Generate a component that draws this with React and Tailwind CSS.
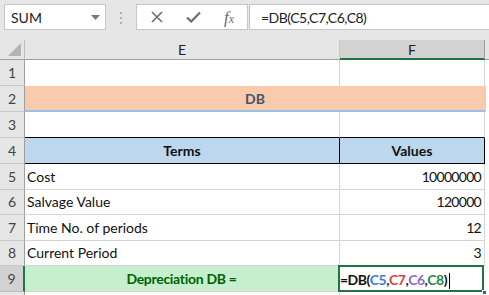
import React from "react";

const font = { fontFamily: "Lato, 'Open Sans', sans-serif" };

function Toolbar() {
  return (
    <div className="flex h-[40px] items-start bg-[#e6e6e6] pt-[4px]">
      {/* Name box */}
      <div className="ml-[4px] flex h-[26px] w-[102px] items-center justify-between border border-[#c6c6c6] bg-white pl-[6px] pr-[5px]">
        <span className="text-[14px] text-[#222]">SUM</span>
        <svg width="9" height="5" viewBox="0 0 9 5">
          <path d="M0 0h9L4.5 5z" fill="#7a7a7a" />
        </svg>
      </div>
      {/* separator dots */}
      <div className="flex w-[30px] flex-col items-center gap-[3px] pt-[8px]">
        <span className="h-[2px] w-[2px] bg-[#b0b0b0]" />
        <span className="h-[2px] w-[2px] bg-[#b0b0b0]" />
        <span className="h-[2px] w-[2px] bg-[#b0b0b0]" />
      </div>
      {/* icon box */}
      <div className="flex h-[26px] w-[112px] items-center border border-[#c6c6c6] bg-white">
        <div className="flex w-[38px] justify-center pl-[2px]">
          <svg width="12" height="12" viewBox="0 0 12 12">
            <path d="M1 1l10 10M11 1L1 11" stroke="#6e6e6e" strokeWidth="1.6" />
          </svg>
        </div>
        <div className="flex w-[36px] justify-center">
          <svg width="15" height="12" viewBox="0 0 15 12">
            <path d="M1 6.5l4.2 4L14 1.5" stroke="#6e6e6e" strokeWidth="2.2" fill="none" />
          </svg>
        </div>
        <div className="flex w-[36px] justify-center">
          <span
            className="text-[17px] italic leading-none text-[#6e6e6e]"
            style={{ fontFamily: "'Liberation Serif', serif" }}
          >
            f<span className="text-[12px]">x</span>
          </span>
        </div>
      </div>
      {/* formula box */}
      <div className="ml-[1px] flex h-[26px] flex-1 items-center border border-[#c6c6c6] border-r-0 bg-white pl-[11px]">
        <span className="text-[14px] tracking-[-0.5px] text-[#222]">=DB(C5,C7,C6,C8)</span>
      </div>
    </div>
  );
}

function RowHead({ n, h, active }) {
  return (
    <div
      className={
        "flex w-[25px] shrink-0 items-end justify-center pb-[2px] text-[14px] text-[#444] " +
        (active
          ? "border-r-2 border-b border-r-[#217346] border-b-[#bdbdbd] bg-[#d2d2d2]"
          : "border-r border-b border-r-[#9e9e9e] border-b-[#c8c8c8] bg-[#e6e6e6]")
      }
      style={{ height: h }}
    >
      {n}
    </div>
  );
}

export default function App() {
  return (
    <div className="h-[295px] w-[489px] overflow-hidden bg-white" style={font}>
      <Toolbar />

      {/* column headers */}
      <div className="flex h-[20px] bg-[#e6e6e6]">
        <div className="relative w-[25px] shrink-0 border-r border-b border-r-[#bdbdbd] border-b-[#9e9e9e]">
          <svg className="absolute left-[8px] top-[3px]" width="13" height="13" viewBox="0 0 13 13">
            <path d="M13 0V13H0z" fill="#b4b4b4" />
          </svg>
        </div>
        <div className="flex w-[315px] shrink-0 items-center justify-center border-r border-b border-r-[#c8c8c8] border-b-[#9e9e9e] text-[14px] text-[#222]">
          E
        </div>
        <div className="flex w-[145px] shrink-0 items-center justify-center border-r border-b-2 border-r-[#9e9e9e] border-b-[#217346] bg-[#d2d2d2] text-[14px] text-[#222]">
          F
        </div>
        <div className="flex-1 border-b border-b-[#9e9e9e]" />
      </div>

      {/* row 1 */}
      <div className="flex h-[26px]">
        <RowHead n="1" h={26} />
        <div className="w-[315px] shrink-0 border-r border-r-[#d4d4d4]" />
        <div className="w-[145px] shrink-0 border-r border-r-[#d4d4d4]" />
      </div>

      {/* row 2 */}
      <div className="flex h-[26px]">
        <RowHead n="2" h={26} />
        <div className="flex w-[460px] shrink-0 items-center justify-center border-b-2 border-b-[#9bc2e6] bg-[#f8cbad] text-[14px] font-bold text-[#44546a]">
          DB
        </div>
        <div className="flex-1 border-l border-l-[#d4d4d4]" />
      </div>

      {/* row 3 */}
      <div className="flex h-[26px]">
        <RowHead n="3" h={26} />
        <div className="w-[315px] shrink-0 border-r border-b border-r-[#d4d4d4] border-b-black" />
        <div className="w-[145px] shrink-0 border-r border-b border-r-[#d4d4d4] border-b-black" />
      </div>

      {/* row 4 */}
      <div className="flex h-[26px]">
        <RowHead n="4" h={26} />
        <div className="flex w-[315px] shrink-0 items-center justify-center border-r border-b border-black bg-[#bdd7ee] text-[14px] font-bold text-[#111]">
          Terms
        </div>
        <div className="flex w-[145px] shrink-0 items-center justify-center border-r border-b border-black bg-[#bdd7ee] text-[14px] font-bold text-[#111]">
          Values
        </div>
      </div>

      {[
        ["5", "Cost", "10000000", 26],
        ["6", "Salvage Value", "120000", 25],
        ["7", "Time No. of periods", "12", 26],
        ["8", "Current Period", "3", 25],
      ].map(([n, label, val, h]) => (
        <div key={n} className="flex" style={{ height: h }}>
          <RowHead n={n} h={h} />
          <div className="flex w-[315px] shrink-0 items-end border-r border-b border-[#d4d4d4] pb-[2px] pl-[2px] text-[14px] text-[#111]">
            {label}
          </div>
          <div className="flex w-[145px] shrink-0 items-end justify-end border-r border-b border-[#d4d4d4] pb-[2px] pr-[3px] text-[14px] tracking-[-0.7px] text-[#111]">
            {val}
          </div>
        </div>
      ))}

      {/* row 9 */}
      <div className="flex h-[26px]">
        <RowHead n="9" h={26} active />
        <div className="flex w-[314px] shrink-0 items-end justify-center border-r border-b border-[#d4d4d4] bg-[#c6efce] pb-[2px] text-[14px] font-bold tracking-[-0.3px] text-[#006100]">
          Depreciation DB =
        </div>
        <div className="relative flex w-[145px] shrink-0 items-end pb-[2px] pl-[1px] text-[14px] font-bold tracking-[-0.5px] text-[#111]">
          <span>=DB(</span>
          <span className="text-[#3e7bd6]">C5</span>
          <span>,</span>
          <span className="text-[#d6413b]">C7</span>
          <span>,</span>
          <span className="text-[#8a6bc9]">C6</span>
          <span>,</span>
          <span className="text-[#1f8a4c]">C8</span>
          <span>)</span>
          <span className="mb-[1px] ml-[2px] h-[16px] w-px bg-black" />
          <div className="pointer-events-none absolute -left-[1px] -top-[1px] h-[27px] w-[146px] border-2 border-[#217346]" />
          <div className="absolute -bottom-[3px] right-[-3px] h-[5px] w-[5px] border border-white bg-[#217346]" />
        </div>
      </div>

      {/* row 10 partial */}
      <div className="flex h-[10px]">
        <div className="w-[25px] shrink-0 border-r border-r-[#9e9e9e] bg-[#e6e6e6]" />
        <div className="w-[315px] shrink-0 border-r border-r-[#d4d4d4]" />
        <div className="w-[145px] shrink-0 border-r border-r-[#d4d4d4]" />
      </div>
    </div>
  );
}
